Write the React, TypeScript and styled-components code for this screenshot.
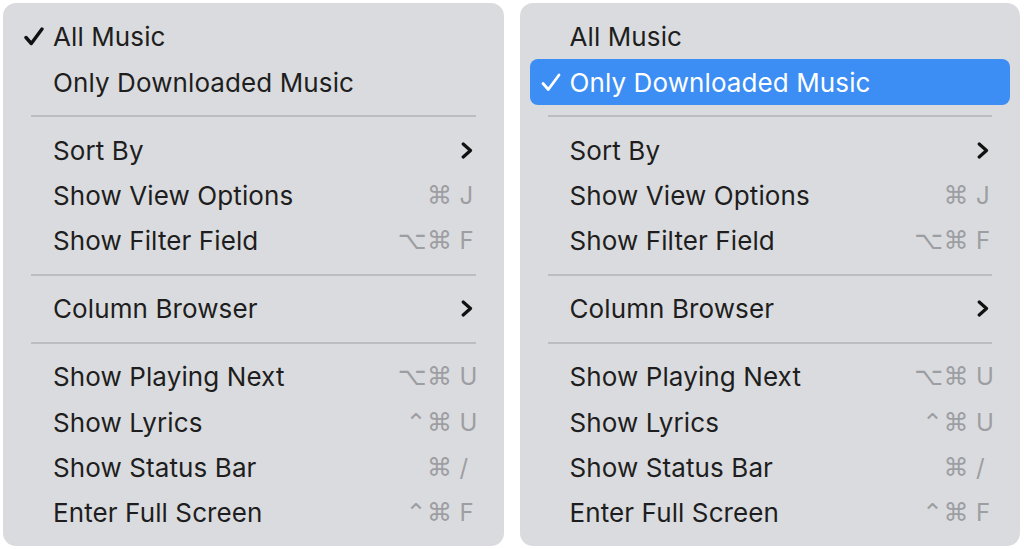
import React from "react";
import styled, { createGlobalStyle } from "styled-components";

const GlobalStyle = createGlobalStyle`
  html, body {
    margin: 0;
    padding: 0;
    background: #ffffff;
  }
  body {
    font-family: Inter, "Noto Sans", "DejaVu Sans", sans-serif;
  }
`;

type Entry =
  | { kind: "sep" }
  | {
      kind: "item";
      label: string;
      checked?: boolean;
      mods?: string;
      keyChar?: string;
      submenu?: boolean;
    };

const buildEntries = (downloaded: boolean): Entry[] => [
  { kind: "item", label: "All Music", checked: !downloaded },
  { kind: "item", label: "Only Downloaded Music", checked: downloaded },
  { kind: "sep" },
  { kind: "item", label: "Sort By", submenu: true },
  { kind: "item", label: "Show View Options", mods: "⌘", keyChar: "J" },
  { kind: "item", label: "Show Filter Field", mods: "⌥⌘", keyChar: "F" },
  { kind: "sep" },
  { kind: "item", label: "Column Browser", submenu: true },
  { kind: "sep" },
  { kind: "item", label: "Show Playing Next", mods: "⌥⌘", keyChar: "U" },
  { kind: "item", label: "Show Lyrics", mods: "⌃⌘", keyChar: "U" },
  { kind: "item", label: "Show Status Bar", mods: "⌘", keyChar: "/" },
  { kind: "item", label: "Enter Full Screen", mods: "⌃⌘", keyChar: "F" },
];

const Page = styled.div`
  display: flex;
  gap: 16px;
  padding: 3px 4px 3px 3px;
`;

const Menu = styled.div`
  width: 501px;
  height: 543px;
  box-sizing: border-box;
  background: #dadbde;
  border-radius: 13px;
  padding: 11px 0 10px;
  display: flex;
  flex-direction: column;
`;

const Item = styled.div<{ $active?: boolean }>`
  height: 45.4px;
  margin: 0 10px;
  padding: 0 18px 0 11px;
  border-radius: 8px;
  display: grid;
  grid-template-columns: 29px 1fr auto;
  align-items: center;
  background: ${(p) => (p.$active ? "#3c8df4" : "transparent")};
  color: ${(p) => (p.$active ? "#ffffff" : "#1e1e20")};
`;

const CheckSlot = styled.span`
  display: flex;
  align-items: center;
  height: 100%;
`;

const Label = styled.span`
  font-size: 26px;
  letter-spacing: 0.1px;
  white-space: nowrap;
`;

const Shortcut = styled.span`
  display: flex;
  align-items: center;
  color: #9d9ea2;
  font-family: "DejaVu Sans", sans-serif;
`;

const Mods = styled.span`
  font-size: 25px;
  text-align: right;
  letter-spacing: 0.5px;
`;

const KeyChar = styled.span`
  font-family: Inter, "DejaVu Sans", sans-serif;
  font-size: 24px;
  width: 16px;
  margin-left: 7px;
  text-align: left;
`;

const Separator = styled.div`
  height: 22.6px;
  display: flex;
  align-items: center;
  margin: 0 28px;

  &::after {
    content: "";
    flex: 1;
    height: 2px;
    background: #bcbdc0;
  }
`;

const Check = ({ color, weight }: { color: string; weight: number }) => (
  <svg width="20" height="19" viewBox="0 0 20 19">
    <path
      d="M2 10.5 L7.3 16.5 L18 2"
      fill="none"
      stroke={color}
      strokeWidth={weight}
      strokeLinecap="round"
      strokeLinejoin="round"
    />
  </svg>
);

const Chevron = () => (
  <svg width="12" height="17" viewBox="0 0 12 17" style={{ marginRight: 3 }}>
    <path
      d="M2.2 2 L9.5 8.5 L2.2 15"
      fill="none"
      stroke="#111"
      strokeWidth="3.2"
      strokeLinecap="round"
      strokeLinejoin="round"
    />
  </svg>
);

const MusicMenu = ({ downloaded, highlight }: { downloaded: boolean; highlight?: boolean }) => (
  <Menu>
    {buildEntries(downloaded).map((e, i) => {
      if (e.kind === "sep") return <Separator key={i} />;
      const active = !!(highlight && e.checked);
      return (
        <Item key={i} $active={active}>
          <CheckSlot>
            {e.checked && <Check color={active ? "#ffffff" : "#111"} weight={active ? 2.8 : 3.4} />}
          </CheckSlot>
          <Label>{e.label}</Label>
          {e.submenu ? (
            <Chevron />
          ) : e.keyChar ? (
            <Shortcut>
              <Mods>{e.mods}</Mods>
              <KeyChar>{e.keyChar}</KeyChar>
            </Shortcut>
          ) : (
            <span />
          )}
        </Item>
      );
    })}
  </Menu>
);

export default function App() {
  return (
    <>
      <GlobalStyle />
      <Page>
        <MusicMenu downloaded={false} />
        <MusicMenu downloaded highlight />
      </Page>
    </>
  );
}
